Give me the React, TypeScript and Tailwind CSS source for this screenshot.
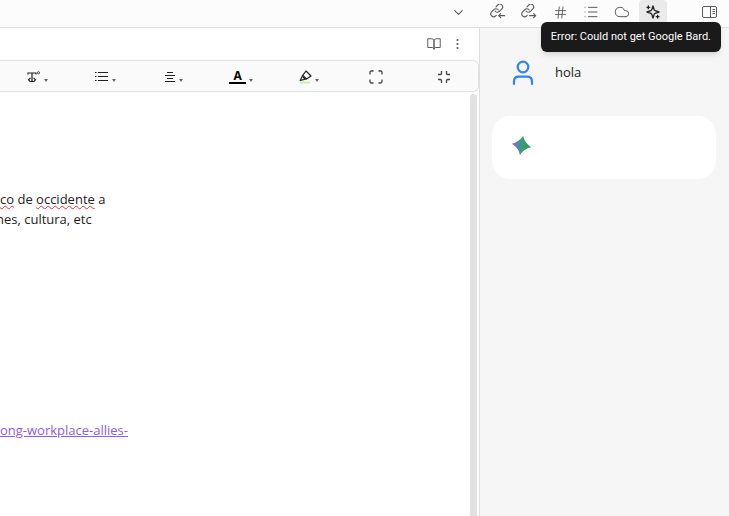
import { Cloud, Hash, List, ChevronDown } from 'lucide-react';
import type { ReactNode } from 'react';

function LinkIcon({ outgoing }: { outgoing?: boolean }) {
  return (
    <svg width="16" height="16" viewBox="0 0 24 24" fill="none" stroke="currentColor" strokeWidth="1.7" strokeLinecap="round" strokeLinejoin="round">
      <path d="M7.500 10.500a4.400 4.400 0 0 0 6.700.5l3.600-3.700A4.200 4.200 0 0 0 11.700 1.500L9 4.300" />
      <path d="M12.500 9a4.400 4.400 0 0 0-6.700-.5l-3.300 3.400a4.200 4.200 0 0 0 6 6l.8-.8" />
      {outgoing ? <path d="M13 17.500h9M19 14.500l3 3-3 3" /> : <path d="M13 17.500h9M16 14.500l-3 3 3 3" />}
    </svg>
  );
}

function SparklesIcon() {
  return (
    <svg width="16" height="16" viewBox="0 0 24 24" fill="none" stroke="currentColor" strokeWidth="2" strokeLinecap="round" strokeLinejoin="round">
      <path d="m12 3-1.900 5.800a2 2 0 0 1-1.300 1.300L3 12l5.800 1.900a2 2 0 0 1 1.300 1.300L12 21l1.900-5.800a2 2 0 0 1 1.300-1.300L21 12l-5.800-1.900a2 2 0 0 1-1.300-1.300L12 3Z" />
      <path d="M5 3v4M19 17v4M3 5h4M17 19h4" />
    </svg>
  );
}

function BookIcon() {
  return (
    <svg width="14" height="14" viewBox="0 0 24 24" fill="none" stroke="currentColor" strokeWidth="1.700" strokeLinecap="round" strokeLinejoin="round">
      <path d="M2 3h6a4 4 0 0 1 4 4v14a3 3 0 0 0-3-3H2zM22 3h-6a4 4 0 0 0-4 4v14a3 3 0 0 1 3-3h7z" />
    </svg>
  );
}

function DotsIcon() {
  return (
    <svg width="3" height="12" viewBox="0 0 3 12" fill="currentColor">
      <circle cx="1.500" cy="2" r="1.100" />
      <circle cx="1.500" cy="6" r="1.100" />
      <circle cx="1.500" cy="10" r="1.100" />
    </svg>
  );
}

function PanelIcon() {
  return (
    <svg width="17" height="14" viewBox="0 0 17 14" fill="none" stroke="currentColor">
      <rect x="1.500" y="1.500" width="14" height="11" rx="1.500" />
      <path d="M9.500 1.500v11M11.500 4.500h2.500M11.500 6.500h2.500M11.500 8.500h2.500" />
    </svg>
  );
}

function TextStyleIcon() {
  return (
    <svg width="14" height="12" viewBox="0 0 14 12" fill="none" stroke="currentColor" strokeWidth="1.200">
      <path d="M1 3.500V2h8v1.500M5 2v9M3.500 6.800L1.500 8.800l2 2M6.500 6.800l2 2-2 2M3.500 10.500h3" />
      <circle cx="11.500" cy="1.800" r="1.100" strokeWidth=".8" />
    </svg>
  );
}

function BulletIcon() {
  return (
    <svg width="14" height="12" viewBox="0 0 14 12" fill="none" stroke="currentColor" strokeWidth="1">
      <path d="M0 1.500h1.500M0 5.500h1.500M0 9.500h1.500M3 1.500h10M3 5.500h10M3 9.500h10" />
    </svg>
  );
}

function AlignIcon() {
  return (
    <svg width="12" height="12" viewBox="0 0 12 12" fill="none" stroke="currentColor" strokeWidth="1">
      <path d="M3 1.500h6M1 4.500h10M3 7.500h6M1 10.500h10" />
    </svg>
  );
}

function HighlightIcon() {
  return (
    <svg width="13" height="14" viewBox="0 0 13 14" fill="none" stroke="currentColor" strokeWidth="1.200" strokeLinejoin="round">
      <path d="M7 1l5 5-4.500 3-3.800-3.700z" />
      <path d="M3.700 5.300L1.200 10.400l6.300-1.400M4 7l2.200 2.300" />
      <path d="M1 12.500h10" stroke="#cbf0ac" strokeWidth="2" />
    </svg>
  );
}

function CornersIcon({ inward }: { inward?: boolean }) {
  return (
    <svg width="14" height="14" viewBox="0 0 14 14" fill="none" stroke="#444" strokeWidth="1.300">
      {inward ? (
        <path d="M1 4.500h2.300q1.200 0 1.200-1.200V1M9.500 1v2.300q0 1.200 1.200 1.200H13M13 9.500h-2.300q-1.200 0-1.200 1.200V13M4.500 13v-2.300q0-1.200-1.200-1.200H1" />
      ) : (
        <path d="M1 4.500V2.500Q1 1 2.500 1h2M9.500 1h2Q13 1 13 2.500v2M13 9.500v2q0 1.500-1.500 1.500h-2M4.500 13h-2Q1 13 1 11.500v-2" />
      )}
    </svg>
  );
}

function UserIcon() {
  return (
    <svg width="22" height="26" viewBox="0 0 22 26" fill="none" stroke="#2f85f5" strokeWidth="2.200" strokeLinecap="round">
      <circle cx="11" cy="7" r="5.300" />
      <path d="M2 24v-2.500c0-3.300 1.800-4.800 4.800-4.800h8.400c3 0 4.800 1.500 4.800 4.800V24" />
    </svg>
  );
}

function BardIcon() {
  return (
    <svg width="19" height="19" viewBox="0 0 18 18">
      <defs>
        <linearGradient id="bard" x1="0" y1=".5" x2="1" y2=".5">
          <stop offset="0" stopColor="#e0506e" />
          <stop offset=".2" stopColor="#6b7bc8" />
          <stop offset=".35" stopColor="#4b86b8" />
          <stop offset=".55" stopColor="#34a269" />
          <stop offset="1" stopColor="#36935f" />
        </linearGradient>
      </defs>
      <path d="M10.500 0Q11.600 4 13.500 6.500 15.500 9 18 10.700 14.500 11.500 12 13.300 9.500 15 7.500 18 6.700 13.500 4.600 11.300 2.500 9 0 7.300 3.700 6.300 6 4.500 8.500 2.800 10.500 0z" fill="url(#bard)" />
    </svg>
  );
}

const tabs = [
  { label: 'Backlinks', icon: <LinkIcon /> },
  { label: 'Outgoing links', icon: <LinkIcon outgoing /> },
  { label: 'Tags', icon: <Hash size={15} strokeWidth={1.5} /> },
  { label: 'Outline', icon: <List size={16} strokeWidth={1.5} /> },
  { label: 'Sync', icon: <Cloud size={16} strokeWidth={1.5} /> },
  { label: 'Bard', icon: <SparklesIcon />, active: true },
];

const tools: { label: string; icon: ReactNode; menu?: boolean }[] = [
  { label: 'Text style', icon: <TextStyleIcon />, menu: true },
  { label: 'List', icon: <BulletIcon />, menu: true },
  { label: 'Align', icon: <AlignIcon />, menu: true },
  { label: 'Font color', icon: <span className="border-b-2 border-black px-1 text-xs leading-3 font-bold text-black">A</span>, menu: true },
  { label: 'Highlight', icon: <HighlightIcon />, menu: true },
  { label: 'Fullscreen', icon: <CornersIcon /> },
  { label: 'Exit fullscreen', icon: <CornersIcon inward /> },
];

export default function App() {
  return (
    <div className="flex h-screen flex-col overflow-hidden bg-white font-['Open_Sans',sans-serif] text-[13px] text-[#222]">
      <header className="flex h-7 shrink-0 items-start justify-end border-b border-[#e0e0e0] bg-[#fcfcfc] pr-1.5 text-[#5c5c5c]">
        <button aria-label="Tab list" className="mr-3 flex h-6 w-7 items-center justify-center"><ChevronDown size={15} strokeWidth={1.7} /></button>
        <nav className="flex gap-[3px]">
          {tabs.map((tab) => (
            <button
              key={tab.label}
              aria-label={tab.label}
              className={`flex h-6 w-7 items-center justify-center rounded ${tab.active ? 'bg-[#eaeaea] text-[#222]' : ''}`}
            >
              {tab.icon}
            </button>
          ))}
        </nav>
        <button aria-label="Toggle sidebar" className="ml-7 flex h-6 w-7 items-center justify-center"><PanelIcon /></button>
      </header>

      <div className="flex min-h-0 flex-1">
        <main className="flex min-w-0 flex-1 flex-col">
          <div className="flex h-8 shrink-0 items-center justify-end gap-[15px] pr-5 text-[#5c5c5c]">
            <button aria-label="Reading view"><BookIcon /></button>
            <button aria-label="More options"><DotsIcon /></button>
          </div>

          <div className="flex h-8 shrink-0 items-center rounded-r-md border-y border-r border-[#e0e0e0] bg-[#fafafa] pt-0.5 pl-1">
            {tools.map((tool) => (
              <button key={tool.label} aria-label={tool.label} className="flex flex-1 items-center justify-center gap-[3px]">
                {tool.icon}
                {tool.menu && (
                  <svg width="4" height="3" viewBox="0 0 4 3" className="mt-1.5"><path d="M0 0h4L2 3z" fill="#666" /></svg>
                )}
              </button>
            ))}
          </div>

          <div className="flex min-h-0 flex-1 justify-between pt-0.5 pr-0.5">
            <article className="pt-[95px] leading-5">
              <p>
                <span className="underline decoration-red-500 decoration-wavy decoration-1">co</span> de{' '}
                <span className="underline decoration-red-500 decoration-wavy decoration-1">occidente</span> a
              </p>
              <p className="-ml-1">nes, cultura, etc</p>
              <a href="#" className="mt-[191px] block text-[#8a5cf5] underline">ong-workplace-allies-</a>
            </article>
            <div className="w-[7px] rounded-t bg-[#e2e2e2]" />
          </div>
        </main>

        <aside className="relative w-[250px] shrink-0 border-l border-[#e0e0e0] bg-[#f6f6f6] pr-[13px] pl-3">
          <div className="flex items-center gap-[21px] px-5 pt-8">
            <UserIcon />
            <p>hola</p>
          </div>
          <div className="mt-[30px] h-[63px] rounded-[18px] bg-white p-5">
            <BardIcon />
          </div>
          <div role="alert" className="absolute -top-1.5 right-2 rounded-md bg-[#1a1a1a] px-2.5 py-2 font-[Roboto,sans-serif] text-[11px] leading-[14px] whitespace-nowrap text-white shadow-md">
            Error: Could not get Google Bard.
          </div>
        </aside>
      </div>
    </div>
  );
}
